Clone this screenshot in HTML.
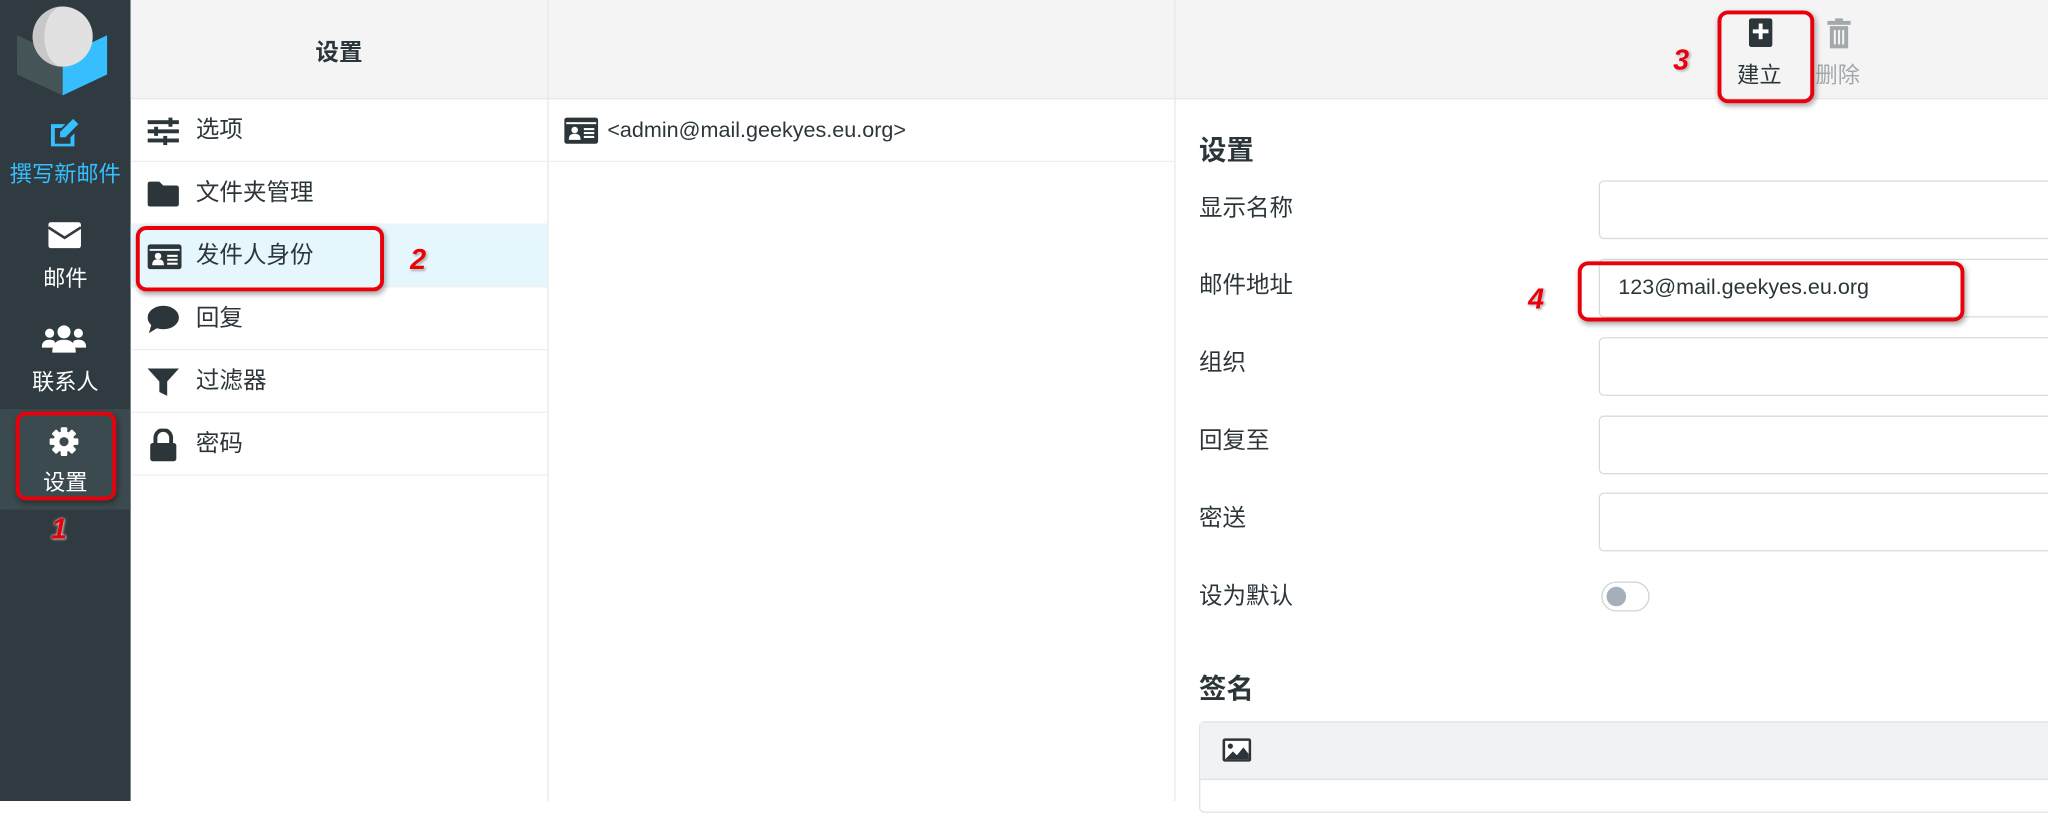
<!DOCTYPE html>
<html><head><meta charset="utf-8"><style>
*{margin:0;padding:0;box-sizing:border-box}
html,body{width:2048px;height:801px;overflow:hidden;background:#fff}
#w{position:absolute;left:0;top:0;width:1568px;height:613px;transform:scale(1.30612,1.3067);transform-origin:0 0;font-family:"Liberation Sans","Noto Sans CJK SC",sans-serif;color:#2c363a}
.a{position:absolute}
.side{left:0;top:0;width:100px;height:613px;background:#2f3b40}
.st{color:#fff;font-size:17px;width:100px;text-align:center}
.hdr{left:100px;top:0;width:1468px;height:76px;background:#f4f4f4;border-bottom:1px solid #e6e9ea}
.vl{top:0;width:1px;height:613px;background:#e6e9ea}
.row{left:100px;width:319px;height:48px;border-bottom:1px solid #edf0f1}
.rt{position:absolute;left:50px;top:11px;font-size:18px;line-height:24px}
.ic{position:absolute;left:13px;top:12px}
.lbl{left:918px;font-size:18px;line-height:24px}
.inp{left:1224px;width:360px;height:45px;border:1px solid #d7dcdf;border-radius:4px;background:#fff}
.red{border:3px solid #e8000b;border-radius:8px;box-shadow:1px 2px 4px rgba(0,0,0,.35)}
.num{color:#e8000b;font-weight:bold;font-size:22px;font-style:italic;text-shadow:0 0 2px #fff,1px 1px 2px #888}
</style></head><body><div id="w">
<div class="a side"></div>
<svg class="a" style="left:12px;top:3px" width="72" height="74" viewBox="0 0 72 74">
<polygon points="1,24 36,40 36,70 1,54" fill="#455457"/>
<polygon points="36,40 70,24 70,54 36,70" fill="#37beff"/>
<circle cx="36" cy="25" r="23" fill="#e1e1e1"/>
<path d="M36 2a23 23 0 0 0 0 46a14 23 0 0 1 0-46z" fill="#c8c8c8"/>
</svg>
<svg class="a" style="left:36px;top:90px" width="26" height="24" viewBox="0 0 26 24"><path d="M3 5h11l-3 3H6v12h12v-5l3-3v10H3z" fill="#37beff"/><path d="M20 1l4 4-10 10h-4v-4z" fill="#37beff"/></svg>
<div class="a st" style="top:119px;color:#37beff">撰写新邮件</div>
<svg class="a" style="left:37px;top:170px" width="25" height="20" viewBox="0 0 25 20"><rect x="0" y="0" width="25" height="20" rx="2" fill="#fff"/><path d="M0 4l12.5 8L25 4" stroke="#2f3b40" stroke-width="2" fill="none"/></svg>
<div class="a st" style="top:199px">邮件</div>
<svg class="a" style="left:32px;top:248px" width="34" height="22" viewBox="0 0 34 22"><circle cx="17" cy="6" r="5" fill="#fff"/><circle cx="6" cy="7" r="3.5" fill="#fff"/><circle cx="28" cy="7" r="3.5" fill="#fff"/><path d="M8 22c0-8 4-10 9-10s9 2 9 10z" fill="#fff"/><path d="M0 18c0-5 3-6 6-6s4 1 4 2v4z M34 18c0-5-3-6-6-6s-4 1-4 2v4z" fill="#fff"/></svg>
<div class="a st" style="top:278px">联系人</div>
<div class="a" style="left:0;top:313px;width:100px;height:77px;background:#3b4a4f"></div>
<svg class="a" style="left:37px;top:326px" width="24" height="24" viewBox="0 0 24 24"><circle cx="12" cy="12" r="8" fill="#fff"/><g fill="#fff"><rect x="9.5" y="1" width="5" height="22" rx="1"/><rect x="1" y="9.5" width="22" height="5" rx="1"/><rect x="9.5" y="1" width="5" height="22" rx="1" transform="rotate(45 12 12)"/><rect x="9.5" y="1" width="5" height="22" rx="1" transform="rotate(-45 12 12)"/></g><circle cx="12" cy="12" r="3.5" fill="#3b4a4f"/></svg>
<div class="a st" style="top:355px">设置</div>
<div class="a red" style="left:12px;top:315px;width:77px;height:68px"></div>
<div class="a num" style="left:39px;top:392px">1</div>

<div class="a hdr"></div>
<div class="a vl" style="left:419px"></div>
<div class="a vl" style="left:899px"></div>
<div class="a" style="left:100px;top:26px;width:319px;text-align:center;font-size:18px;font-weight:bold">设置</div>

<div class="a row" style="top:76px"><svg class="ic" width="24" height="24" viewBox="0 0 24 24"><g fill="#2c363a"><rect y="4" width="24" height="3"/><rect y="11" width="24" height="3"/><rect y="18" width="24" height="3"/><rect x="16" y="2" width="3" height="7"/><rect x="5" y="9" width="3" height="7"/><rect x="12" y="16" width="3" height="7"/></g></svg><div class="rt">选项</div></div>
<div class="a row" style="top:124px"><svg class="ic" width="24" height="24" viewBox="0 0 24 24"><path d="M0 5q0-2 2-2h7l3 3h10q2 0 2 2v12q0 2-2 2H2q-2 0-2-2z" fill="#2c363a"/></svg><div class="rt">文件夹管理</div></div>
<div class="a row" style="top:172px;background:#e6f6fd"><svg class="ic" width="26" height="24" viewBox="0 0 26 24"><rect y="3" width="26" height="19" rx="2" fill="#2c363a"/><rect x="1.5" y="6.5" width="23" height="1.5" fill="#e6f6fd"/><circle cx="8" cy="12" r="2.5" fill="#fff"/><path d="M3.5 19c0-4 2-4.5 4.5-4.5s4.5.5 4.5 4.5z" fill="#fff"/><rect x="15" y="11" width="8" height="1.6" fill="#fff"/><rect x="15" y="14" width="8" height="1.6" fill="#fff"/><rect x="15" y="17" width="8" height="1.6" fill="#fff"/></svg><div class="rt">发件人身份</div></div>
<div class="a row" style="top:220px"><svg class="ic" width="24" height="24" viewBox="0 0 24 24"><ellipse cx="12" cy="11" rx="12" ry="9" fill="#2c363a"/><path d="M3 16l-2 7 8-5z" fill="#2c363a"/></svg><div class="rt">回复</div></div>
<div class="a row" style="top:268px"><svg class="ic" width="24" height="24" viewBox="0 0 24 24"><path d="M0 2h24l-9 10v11l-6-3v-8z" fill="#2c363a"/></svg><div class="rt">过滤器</div></div>
<div class="a row" style="top:316px"><svg class="ic" width="24" height="26" viewBox="0 0 24 26"><path d="M6 11V7a6 6 0 0 1 12 0v4" stroke="#2c363a" stroke-width="3" fill="none"/><rect x="2" y="11" width="20" height="14" rx="2" fill="#2c363a"/></svg><div class="rt">密码</div></div>
<div class="a red" style="left:104px;top:173px;width:190px;height:50px"></div>
<div class="a num" style="left:314px;top:186px">2</div>

<div class="a" style="left:419px;top:76px;width:480px;height:48px;border-bottom:1px solid #edf0f1"></div>
<svg class="a" style="left:432px;top:89px" width="26" height="22" viewBox="0 0 26 22"><rect y="1" width="26" height="20" rx="2" fill="#2c363a"/><rect x="1.5" y="4.5" width="23" height="1.5" fill="#fff"/><circle cx="8" cy="10.5" r="2.5" fill="#fff"/><path d="M3.5 18c0-4 2-4.5 4.5-4.5s4.5.5 4.5 4.5z" fill="#fff"/><rect x="15" y="9" width="8" height="1.6" fill="#fff"/><rect x="15" y="12" width="8" height="1.6" fill="#fff"/><rect x="15" y="15" width="8" height="1.6" fill="#fff"/></svg>
<div class="a" style="left:465px;top:89px;font-size:16.5px;line-height:22px">&lt;admin@mail.geekyes.eu.org&gt;</div>

<svg class="a" style="left:1339px;top:14px" width="18" height="22" viewBox="0 0 18 22"><rect width="18" height="22" rx="2" fill="#2c363a"/><rect x="7.5" y="4" width="3" height="12" fill="#fff"/><rect x="3" y="8.5" width="12" height="3" fill="#fff"/></svg>
<div class="a" style="left:1330px;top:43px;font-size:17px">建立</div>
<svg class="a" style="left:1399px;top:14px" width="18" height="24" viewBox="0 0 18 24"><rect x="0" y="2" width="18" height="3" fill="#a3a8aa"/><rect x="6" y="0" width="6" height="3" fill="#a3a8aa"/><path d="M2 6h14v17H2z" fill="#a3a8aa"/><g fill="#f4f4f4"><rect x="5" y="9" width="1.6" height="11"/><rect x="8.2" y="9" width="1.6" height="11"/><rect x="11.4" y="9" width="1.6" height="11"/></g></svg>
<div class="a" style="left:1390px;top:43px;font-size:17px;color:#a3a8aa">删除</div>
<div class="a red" style="left:1315px;top:8px;width:74px;height:71px"></div>
<div class="a num" style="left:1281px;top:33px">3</div>

<div class="a" style="left:918px;top:99px;font-size:21px;font-weight:bold">设置</div>
<div class="a lbl" style="top:147px">显示名称</div>
<div class="a lbl" style="top:206px">邮件地址</div>
<div class="a lbl" style="top:265px">组织</div>
<div class="a lbl" style="top:325px">回复至</div>
<div class="a lbl" style="top:384px">密送</div>
<div class="a lbl" style="top:444px">设为默认</div>
<div class="a inp" style="top:138px"></div>
<div class="a inp" style="top:198px"></div>
<div class="a inp" style="top:258px"></div>
<div class="a inp" style="top:318px"></div>
<div class="a inp" style="top:377px"></div>
<div class="a" style="left:1239px;top:208px;font-size:16.5px;line-height:24px">123@mail.geekyes.eu.org</div>
<div class="a" style="left:1226px;top:445px;width:37px;height:23px;border:1px solid #cfd4d7;border-radius:12px;background:#fff"><div style="position:absolute;left:3px;top:3px;width:15px;height:15px;border-radius:50%;background:#a6b0ba"></div></div>
<div class="a red" style="left:1208px;top:200px;width:296px;height:46px"></div>
<div class="a num" style="left:1170px;top:216px">4</div>

<div class="a" style="left:918px;top:511px;font-size:21px;font-weight:bold">签名</div>
<div class="a" style="left:918px;top:552px;width:660px;height:70px;border:1px solid #dfe3e5;border-radius:4px"></div>
<div class="a" style="left:919px;top:553px;width:660px;height:44px;background:#f1f2f3;border-bottom:1px solid #dfe3e5"></div>
<svg class="a" style="left:936px;top:565px" width="22" height="18" viewBox="0 0 22 18"><rect width="22" height="18" rx="2" fill="#2c363a"/><rect x="2" y="2" width="18" height="14" fill="#fff"/><circle cx="6" cy="6" r="2" fill="#2c363a"/><path d="M2 16l6-6 3 3 5-6 4 5v4z" fill="#2c363a"/></svg>
</div></body></html>
